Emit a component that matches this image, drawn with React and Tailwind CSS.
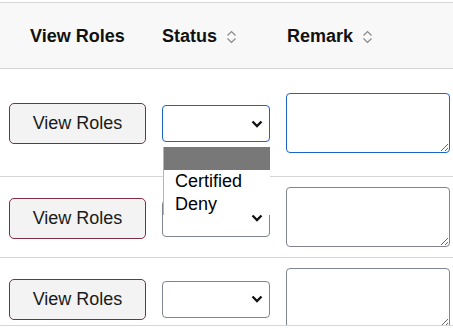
import React from "react";

const SortIcon = () => (
  <svg width="11" height="14" viewBox="0 0 11 14" fill="none" stroke="#888" strokeWidth="1.2">
    <path d="M1.5 5.5 L5.5 1.5 L9.5 5.5" />
    <path d="M1.5 8.5 L5.5 12.5 L9.5 8.5" />
  </svg>
);

const Chevron = () => (
  <svg width="12" height="8" viewBox="0 0 12 8" fill="none" stroke="#111" strokeWidth="2.3">
    <path d="M1.5 1.5 L6 6 L10.5 1.5" />
  </svg>
);

const StatusSelect = ({ focused, open }) => (
  <div className="relative">
    <div
      className={
        "w-[108px] h-[37px] rounded-[4px] bg-white flex items-center justify-end pr-[6px] " +
        (focused ? "border border-[#1b64c8]" : "border border-[#7f8590]")
      }
    >
      <Chevron />
    </div>
    {open && (
      <div className="absolute left-[1px] top-[42px] w-[107px] h-[68px] bg-white border-l border-[#b5b5b5] z-10 text-[18px] leading-[23px] text-black">
        <div className="h-[23px] bg-[#787878]" />
        <div className="pl-[11px]">Certified</div>
        <div className="pl-[11px]">Deny</div>
      </div>
    )}
  </div>
);

const Row = ({ height, focused, open }) => (
  <div className="flex items-center border-b border-[#d6d6d6]" style={{ height }}>
    <div className="w-[154px] pl-[9px] shrink-0 pt-[2px]">
      <button className="w-[137px] h-[41px] rounded-[5px] border border-[#7d2e40] bg-[#f3f3f3] text-[18px] text-[#1a1a1a]">
        View Roles
      </button>
    </div>
    <div className="w-[132px] pl-[8px] shrink-0 pt-[2px]">
      <StatusSelect focused={focused} open={open} />
    </div>
    <div className="shrink-0">
      <textarea
        readOnly
        className={
          "block w-[164px] h-[60px] rounded-[4px] bg-white outline-none " +
          (focused ? "border border-[#1b64c8]" : "border border-[#7f8590]")
        }
      />
    </div>
  </div>
);

export default function App() {
  return (
    <div className="w-[453px] h-[329px] bg-white pt-[2px]" style={{ fontFamily: '"Liberation Sans", Arial, sans-serif' }}>
      <div className="h-[324px] border-y border-[#d6d6d6] overflow-hidden">
        <div className="flex items-center h-[66px] bg-[#f8f8f8] border-b border-[#d6d6d6] text-[18px] font-bold text-[#111] pt-[2px]">
          <div className="w-[154px] shrink-0 pl-[30px]">View Roles</div>
          <div className="w-[132px] shrink-0 pl-[8px] flex items-center gap-[9px]">
            Status <SortIcon />
          </div>
          <div className="flex items-center gap-[9px] pl-[1px]">
            Remark <SortIcon />
          </div>
        </div>
        <Row height={108} focused open />
        <Row height={81} />
        <Row height={81} />
      </div>
    </div>
  );
}
